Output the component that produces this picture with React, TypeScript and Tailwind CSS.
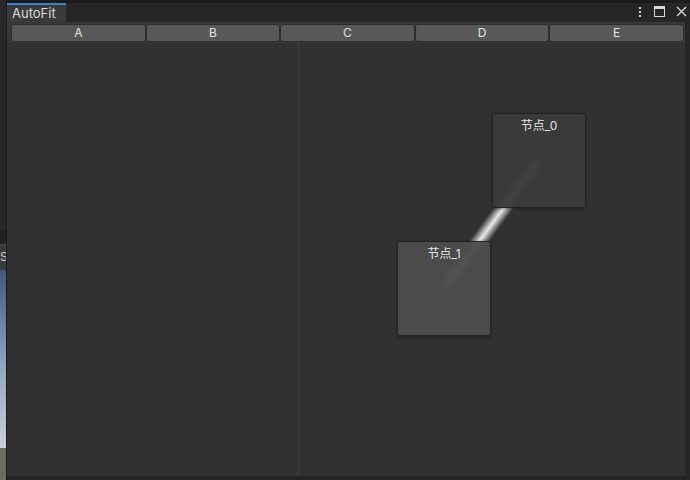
import React from "react";

const font = { fontFamily: 'Inter, "Noto Sans CJK SC", sans-serif' };

function Dots() {
  return (
    <svg width="4" height="12" viewBox="0 0 4 12">
      <rect x="1" y="1" width="2" height="2" fill="#d8d8d8" />
      <rect x="1" y="5" width="2" height="2" fill="#d8d8d8" />
      <rect x="1" y="9" width="2" height="2" fill="#d8d8d8" />
    </svg>
  );
}

function MaxIcon() {
  return (
    <svg width="11" height="11" viewBox="0 0 11 11">
      <rect x="0.5" y="0.5" width="10" height="10" fill="none" stroke="#d8d8d8" />
      <rect x="0.5" y="0.5" width="10" height="2.5" fill="#d8d8d8" />
    </svg>
  );
}

function CloseIcon() {
  return (
    <svg width="11" height="11" viewBox="0 0 11 11">
      <path d="M1 1 L10 10 M10 1 L1 10" stroke="#d8d8d8" strokeWidth="1.4" />
    </svg>
  );
}

export default function App() {
  const cols = ["A", "B", "C", "D", "E"];
  return (
    <div className="w-[690px] h-[480px] flex bg-[#1c1c1c] overflow-hidden" style={font}>
      {/* left neighbour strip */}
      <div className="w-[6px] flex flex-col shrink-0 overflow-hidden">
        <div className="h-[230px] bg-[#272727]" />
        <div className="h-[14px] bg-[#202020]" />
        <div className="h-[26px] bg-[#3a3a3a] border-t border-[#4a4a4a] overflow-hidden text-[12px] text-[#cfcfcf] leading-[24px] whitespace-nowrap">
          Sc
        </div>
        <div className="flex-1 bg-linear-to-b from-[#43577c] via-[#8da2c0] to-[#c9cfd6]" />
        <div className="h-[32px] bg-[#6e6a66]" />
      </div>

      {/* main window */}
      <div className="flex-1 flex flex-col border-l border-[#1a1a1a]">
        {/* header */}
        <div className="h-[22px] bg-[#262626] flex items-end border-t-[3px] border-[#1b1b1b] shrink-0">
          <div className="w-[59px] h-[19px] bg-[#3b3b3b] border-t-2 border-[#3d82cc] text-[13px] text-[#dcdcdc] leading-[16px] pl-[5px]">
            AutoFit
          </div>
          <div className="flex-1" />
          <div className="flex items-center gap-[5px] h-full pb-[2px] pr-[3px]">
            <Dots />
            <div className="w-[2px]" />
            <MaxIcon />
            <div className="w-[1px]" />
            <CloseIcon />
          </div>
        </div>

        {/* window body */}
        <div className="flex-1 flex flex-col bg-[#383838] border-r-[5px] border-[#262626]">
          {/* toolbar */}
          <div className="h-[21px] flex pl-[4px] pr-[1px] pt-[2px] pb-[1px] gap-0 shrink-0">
            {cols.map((c) => (
              <div
                key={c}
                className="flex-1 h-[18px] bg-[#585858] border border-[#2d2d2d] rounded-[3px] text-[12px] text-[#e4e4e4] leading-[16px] text-center"
              >
                {c}
              </div>
            ))}
          </div>

          {/* panes */}
          <div className="flex-1 flex border-b-[4px] border-[#242424]">
            <div className="w-[290px] bg-[#313131]" />
            <div className="w-[3px] bg-[#373737]" />
            <div className="flex-1 bg-[#313131] relative overflow-hidden">
              {/* edge */}
              <div className="absolute left-[183px] top-[102px] w-[17px] h-[159px] rotate-[36.5deg] bg-linear-to-r from-white/0 via-white/90 to-white/0" />
              {/* node 0 */}
              <div className="absolute left-[192px] top-[70px] w-[94px] h-[95px] bg-[#3b3b3b]/[0.97] border border-[#232323] rounded-[3px] shadow-[0_1px_3px_rgba(0,0,0,0.35)]">
                <div className="text-center text-[12px] text-[#e6e6e6] mt-[3px]">节点_0</div>
              </div>
              {/* node 1 */}
              <div className="absolute left-[97px] top-[198px] w-[94px] h-[95px] bg-[#4c4c4c]/[0.97] border border-[#232323] rounded-[3px] shadow-[0_1px_3px_rgba(0,0,0,0.35)]">
                <div className="text-center text-[12px] text-[#e6e6e6] mt-[3px]">节点_1</div>
              </div>
            </div>
          </div>
        </div>
      </div>
    </div>
  );
}
